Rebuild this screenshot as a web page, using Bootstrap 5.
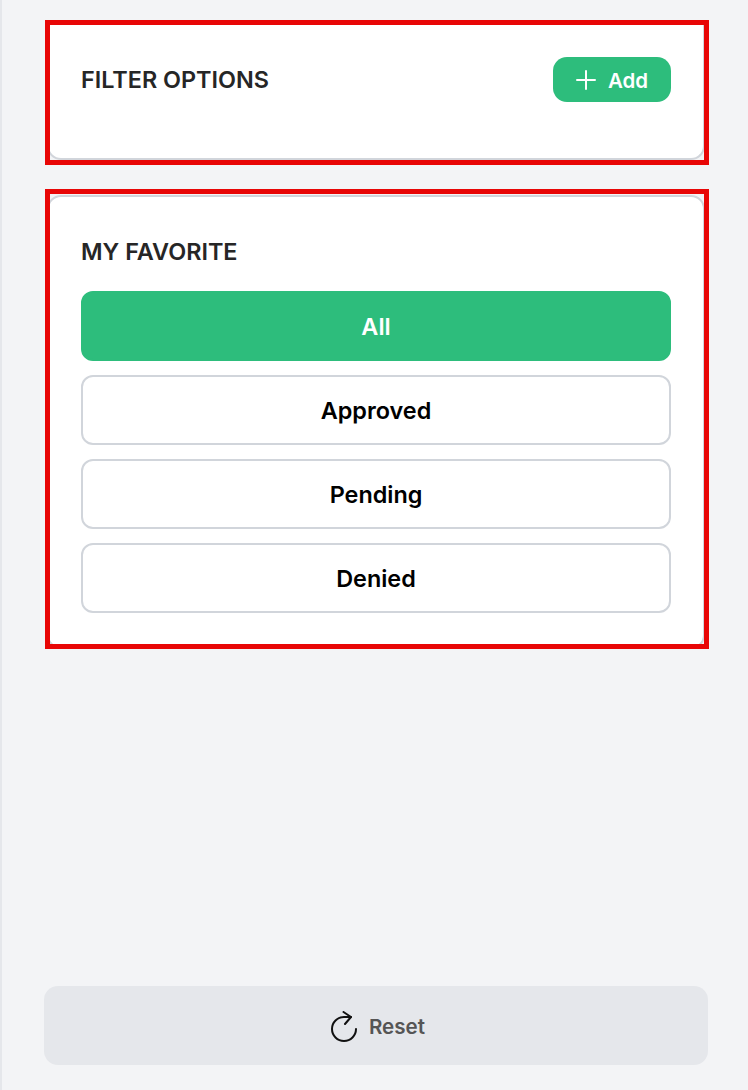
<!DOCTYPE html>
<html lang="en">
<head>
<meta charset="utf-8">
<title>Filter options</title>
<link rel="stylesheet" href="https://cdn.jsdelivr.net/npm/bootstrap@5.3.0/dist/css/bootstrap.min.css">
<style>
html, body { height: 100%; }
body { font-family: Inter, "Liberation Sans", sans-serif; background: #f3f4f6; overflow: hidden; }
.side-shell { height: 1090px; border-left: 2px solid #e5e7eb; padding: 24px 40px 25px 42px; }
.panel-wrap { position: relative; margin-left: 3px; margin-right: 3px; }
.panel-wrap + .panel-wrap { margin-top: 35px; }
.panel-frame { position: absolute; left: -2px; right: -4px; border: 5px solid #e80606; pointer-events: none; }
.panel-wrap:first-child .panel-frame { top: -4px; bottom: -5px; }
.panel-wrap:nth-child(2) .panel-frame { top: -6px; bottom: 0; }
.filter-card { background: #fff; border: 2px solid #d1d5db; border-radius: 14px; padding: 32px; }
.panel-wrap:first-child .filter-card { padding-top: 33px; border-top: 0; border-top-left-radius: 0; border-top-right-radius: 0; }
.panel-wrap:nth-child(2) .filter-card { padding-bottom: 34px; }
.panel-title { font-size: 23.4px; font-weight: 600; line-height: 32px; color: #262626; margin: 0; }
.add-btn { width: 118px; height: 45px; background: #2dbd7c; border: 0; border-radius: 14px; color: #fff; font-size: 20.5px; font-weight: 600; padding: 0; display: flex; align-items: center; justify-content: center; gap: 12px; }
.add-btn:hover { background: #2dbd7c; color: #fff; }
.add-label { padding-top: 4px; }
.head-row { height: 45px; margin-bottom: 24px; }
.fav-title { margin-top: 7px; margin-bottom: 23px; }
.opt-stack { display: flex; flex-direction: column; gap: 14px; }
.opt-btn { height: 70px; border-radius: 12px; border: 2px solid #d1d5db; background: #fff; color: #000; font-size: 23.4px; font-weight: 600; padding: 2px 0 0; }
.opt-btn:hover { background: #fff; color: #000; border-color: #d1d5db; }
.opt-btn.is-on, .opt-btn.is-on:hover { background: #2dbd7c; border-color: #2dbd7c; color: #fff; }
.reset-btn { width: 664px; height: 79px; background: #e5e7eb; border: 0; border-radius: 14px; color: #555; font-size: 20.6px; font-weight: 600; display: flex; align-items: center; justify-content: center; gap: 11px; padding: 2px 0 0 3px; }
.reset-btn:hover { background: #e5e7eb; color: #555; }
.reset-label { padding-top: 2px; }
</style>
</head>
<body>
<div class="side-shell d-flex flex-column">
  <section>
    <div class="panel-wrap">
      <div class="filter-card">
        <div class="head-row d-flex align-items-center justify-content-between">
          <h2 class="panel-title">FILTER OPTIONS</h2>
          <button type="button" class="btn add-btn">
            <svg width="20" height="20" viewBox="0 0 20 20" fill="none" stroke="#fff" stroke-width="2" stroke-linecap="round"><path d="M10 1v18M1 10h18"/></svg>
            <span class="add-label">Add</span>
          </button>
        </div>
      </div>
      <div class="panel-frame"></div>
    </div>
    <div class="panel-wrap">
      <div class="filter-card">
        <h2 class="panel-title fav-title">MY FAVORITE</h2>
        <div class="opt-stack">
          <button type="button" class="btn opt-btn is-on">All</button>
          <button type="button" class="btn opt-btn">Approved</button>
          <button type="button" class="btn opt-btn">Pending</button>
          <button type="button" class="btn opt-btn">Denied</button>
        </div>
      </div>
      <div class="panel-frame"></div>
    </div>
  </section>
  <button type="button" class="btn reset-btn mt-auto">
    <svg width="28" height="32" viewBox="0 0 28 32" fill="none" stroke="#111" stroke-width="2" stroke-linecap="round" stroke-linejoin="round"><path d="M21 6H14A12 12 0 1 0 26 18"/><path d="M13.500 1L21 6L15 13"/></svg>
    <span class="reset-label">Reset</span>
  </button>
</div>
<script src="https://cdn.jsdelivr.net/npm/bootstrap@5.3.0/dist/js/bootstrap.bundle.min.js"></script>
</body>
</html>
